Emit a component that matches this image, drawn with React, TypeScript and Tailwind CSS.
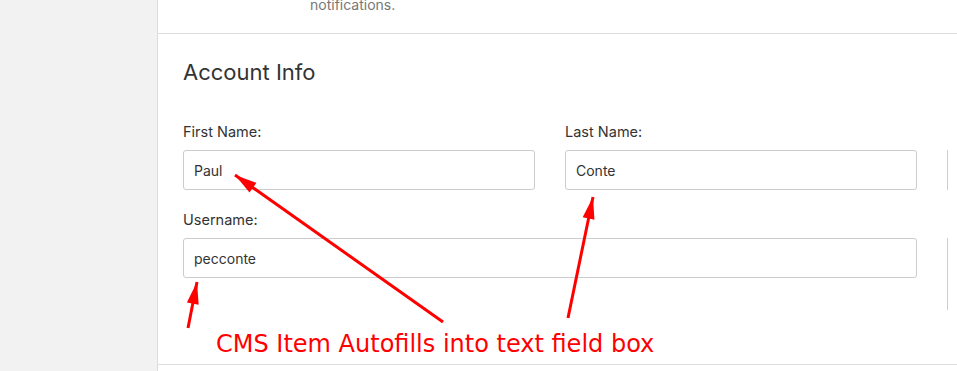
import React from 'react';

type Pt = [number, number];

const arrowHead = (tail: Pt, tip: Pt, len = 22, half = 6) => {
  const dx = tip[0] - tail[0];
  const dy = tip[1] - tail[1];
  const d = Math.hypot(dx, dy);
  const ux = dx / d;
  const uy = dy / d;
  const bx = tip[0] - ux * len;
  const by = tip[1] - uy * len;
  return `${tip[0]},${tip[1]} ${bx - uy * half},${by + ux * half} ${bx + uy * half},${by - ux * half}`;
};

const arrows: { tail: Pt; tip: Pt }[] = [
  { tail: [443, 322], tip: [235, 175] },
  { tail: [568, 318], tip: [593, 197] },
  { tail: [188, 328], tip: [197, 282] }
];

const Field = ({ label, value }: { label: string; value: string }) => (
  <div>
    <label className="block text-[14.5px] leading-5 text-[#333] mb-2">{label}</label>
    <div className="h-10 border border-[#ccc] rounded-[3px] px-[10px] flex items-center text-[14px] text-[#333]">
      {value}
    </div>
  </div>
);

export default function App() {
  return (
    <div className="relative h-[371px] w-full flex overflow-hidden bg-white font-['Inter',sans-serif]">
      <div className="w-[158px] shrink-0 bg-[#f2f2f2] border-r border-[#dcdcdc]" />

      <div className="flex-1 min-w-0">
        <div className="h-[34px] border-b border-[#dedede]">
          <p className="relative -top-[5px] pl-[152px] text-[14px] leading-5 text-[#777]">notifications.</p>
        </div>

        <div className="h-[331px] border-b border-[#dedede] pl-[25px] pt-6">
          <h2 className="text-[22px] leading-7 text-[#333] mb-9">Account Info</h2>
          <div className="grid grid-cols-[352px_352px_200px] gap-x-[30px] gap-y-5">
            <Field label="First Name:" value="Paul" />
            <Field label="Last Name:" value="Conte" />
            <div className="pt-7">
              <div className="h-10 border-l border-[#ccc]" />
            </div>
            <div className="col-span-2">
              <Field label="Username:" value="pecconte" />
            </div>
            <div className="pt-7">
              <div className="h-[72px] border-l border-[#ccc]" />
            </div>
          </div>
        </div>
      </div>

      <svg className="absolute inset-0 pointer-events-none" width="957" height="371">
        {arrows.map((a, i) => (
          <g key={i}>
            <line x1={a.tail[0]} y1={a.tail[1]} x2={a.tip[0]} y2={a.tip[1]} stroke="#ff0000" strokeWidth={3} />
            <polygon points={arrowHead(a.tail, a.tip)} fill="#ff0000" />
          </g>
        ))}
      </svg>

      <p className="absolute left-[216px] top-[330px] text-[24px] leading-7 text-[#ff0000] font-['DejaVu_Sans',sans-serif] whitespace-nowrap">
        CMS Item Autofills into text field box
      </p>
    </div>
  );
}
